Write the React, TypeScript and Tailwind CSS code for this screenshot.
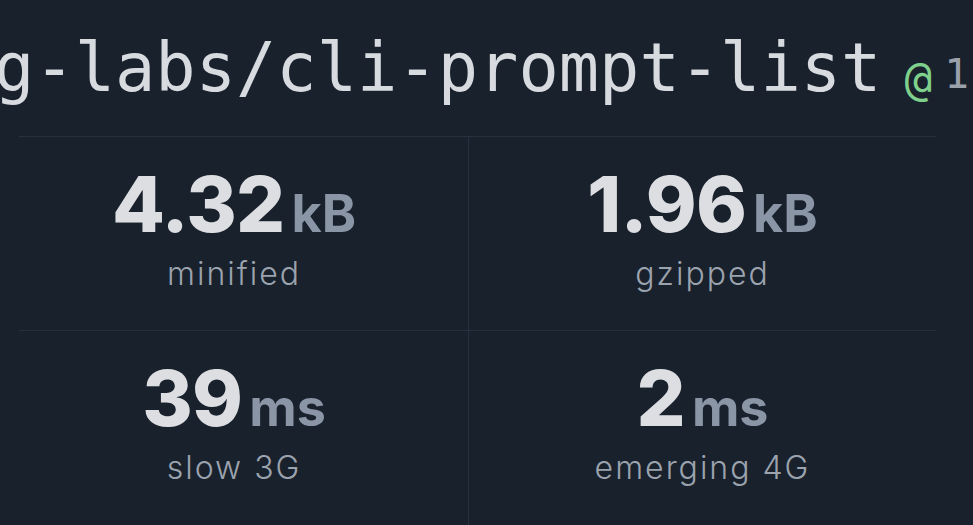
import React from "react";

const num = "text-[#dcdee2] text-[77px] font-extrabold leading-none tracking-[-0.01em]";
const unit = "text-[#8a95a6] text-[52px] font-bold leading-none ml-[7px]";
const label = "text-[#9ba3ae] text-[32px] font-light leading-none mt-[15px] tracking-[2px]";

function Stat({ value, u, l }: { value: string; u: string; l: string }) {
  return (
    <div className="flex flex-col items-center">
      <div className="flex items-baseline">
        <span className={num}>{value}</span>
        <span className={unit}>{u}</span>
      </div>
      <div className={label}>{l}</div>
    </div>
  );
}

export default function App() {
  return (
    <div
      className="w-[973px] h-[525px] overflow-hidden bg-[#19212d]"
      style={{ fontFamily: "Inter, 'Noto Sans', sans-serif" }}
    >
      <div className="pt-[35px] h-[136px] whitespace-nowrap flex items-baseline ml-[-6px]">
        <span
          className="text-[67px] leading-none text-[#d7dadf]"
          style={{ fontFamily: "'DejaVu Sans Mono', monospace" }}
        >
          g-labs/cli-prompt-list
        </span>
        <span
          className="text-[46px] leading-none text-[#7fd08c] ml-[23px] relative top-[4px]"
          style={{ fontFamily: "'DejaVu Sans Mono', monospace" }}
        >
          @
        </span>
        <span
          className="text-[41px] leading-none text-[#9aa1ab] ml-[12px] relative top-[-3px]"
          style={{ fontFamily: "'DejaVu Sans Mono', monospace" }}
        >
          1.0.0
        </span>
      </div>
      <div className="h-px w-[917px] ml-[19px] bg-[#263140]" />
      <div className="grid grid-cols-[469px_467px] w-[936px]">
        <div className="border-r border-[#263140] h-[193px] pt-[29px]">
          <Stat value="4.32" u="kB" l="minified" />
        </div>
        <div className="h-[193px] pt-[29px]">
          <Stat value="1.96" u="kB" l="gzipped" />
        </div>
      </div>
      <div className="h-px w-[917px] ml-[19px] bg-[#263140]" />
      <div className="grid grid-cols-[469px_467px] w-[936px]">
        <div className="border-r border-[#263140] h-[194px] pt-[29px]">
          <Stat value="39" u="ms" l="slow 3G" />
        </div>
        <div className="h-[194px] pt-[29px]">
          <Stat value="2" u="ms" l="emerging 4G" />
        </div>
      </div>
    </div>
  );
}
